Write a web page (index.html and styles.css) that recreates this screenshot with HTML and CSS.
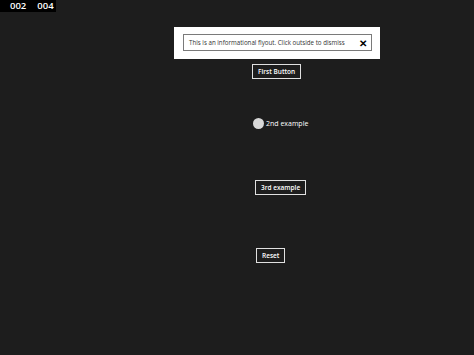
FILE: index.html
```html
<!DOCTYPE html>
<html lang="en">
<head>
    <meta charset="UTF-8">
    <meta name="viewport" content="width=device-width, initial-scale=1.0">
    <title>Flyout sample</title>
    <link rel="stylesheet" href="styles.css">
</head>
<body>
    <div class="counter">
        <span>002</span>
        <span>004</span>
    </div>

    <div class="content">
        <button class="btn first">First Button</button>
        <div class="example second">
            <span class="dot"></span>
            <span>2nd example</span>
        </div>
        <button class="btn third">3rd example</button>
        <button class="btn reset">Reset</button>
    </div>

    <div class="flyout">
        <div class="flyout-box">
            <span class="flyout-text">This is an informational flyout. Click outside to dismiss</span>
            <span class="flyout-close">&#x2715;</span>
        </div>
    </div>
</body>
</html>
```

FILE: styles.css
```css
body {
    margin: 0;
    background-color: #1d1d1d;
    font-family: "Open Sans", "Noto Sans", sans-serif;
    color: #fff;
    height: 355px;
    position: relative;
}
.counter {
    display: flex;
    width: fit-content;
    gap: 11px;
    background-color: #000;
    padding: 0 2px 0 10px;
    height: 12px;
    font-size: 9.5px;
    font-weight: 600;
    line-height: 11px;
}
.content {
    display: flex;
    flex-direction: column;
    align-items: flex-start;
    padding-left: 252px;
    padding-top: 52px;
}
.btn {
    background: transparent;
    color: #fff;
    border: 1px solid #e0e0e0;
    font-family: inherit;
    font-size: 6.5px;
    font-weight: 600;
    white-space: nowrap;
    height: 15px;
    padding: 0 5px;
    line-height: 13px;
}
.example {
    display: flex;
    align-items: center;
    gap: 2px;
    margin-top: 39px;
    margin-left: 1px;
    font-size: 7px;
    white-space: nowrap;
}
.dot {
    width: 11px;
    height: 11px;
    border-radius: 50%;
    background-color: #d8d8d8;
}
.third {
    margin-top: 51px;
    margin-left: 3px;
}
.reset {
    margin-top: 53px;
    margin-left: 4px;
}
.flyout {
    position: absolute;
    left: 174px;
    top: 27px;
    width: 206px;
    height: 32px;
    background-color: #fff;
    box-sizing: border-box;
    padding: 7px 8px 0 9px;
}
.flyout-box {
    display: flex;
    align-items: center;
    justify-content: space-between;
    border: 1px solid #7a7a7a;
    height: 15px;
    padding: 0 4px 0 5px;
}
.flyout-text {
    color: #333;
    font-size: 6.2px;
    white-space: nowrap;
}
.flyout-close {
    color: #000;
    font-size: 10px;
    font-weight: 700;
}
```
